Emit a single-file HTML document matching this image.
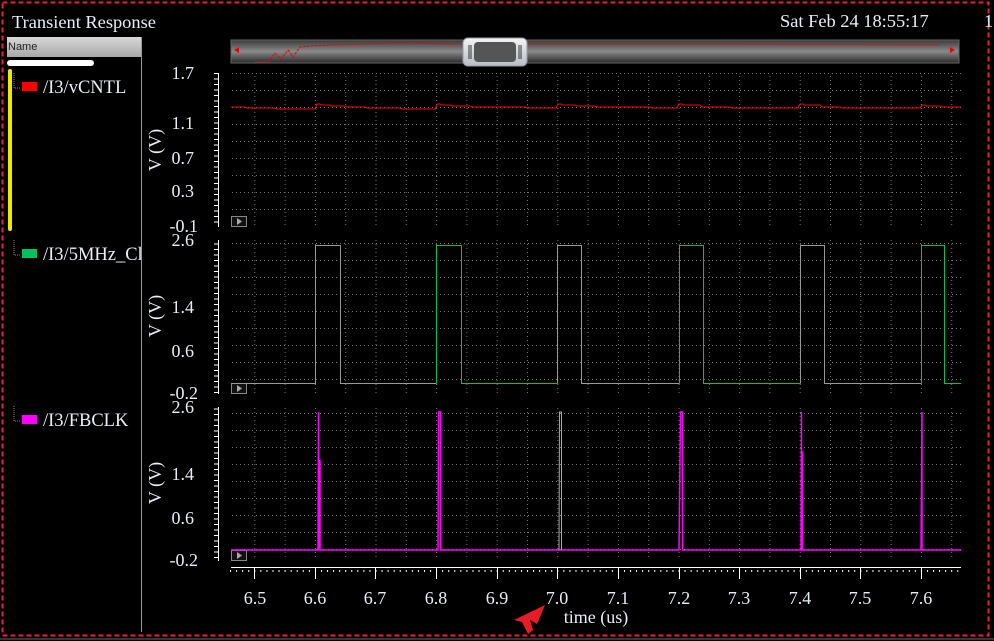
<!DOCTYPE html>
<html><head><meta charset="utf-8"><style>
html,body{margin:0;padding:0;background:#000;width:994px;height:641px;overflow:hidden}
svg{display:block}
text{font-family:"Liberation Serif",serif;fill:#e8eef8}
</style></head><body>
<svg width="994" height="641" viewBox="0 0 994 641" xmlns="http://www.w3.org/2000/svg">
<defs>
<linearGradient id="sl" x1="0" y1="0" x2="0" y2="1">
<stop offset="0" stop-color="#3a3a3a"/><stop offset="0.5" stop-color="#8a8a8a"/><stop offset="1" stop-color="#2a2a2a"/></linearGradient>
<linearGradient id="hd" x1="0" y1="0" x2="0" y2="1">
<stop offset="0" stop-color="#d8d8d8"/><stop offset="1" stop-color="#a8a8a8"/></linearGradient>
<linearGradient id="hn" x1="0" y1="0" x2="0" y2="1">
<stop offset="0" stop-color="#f4f4f4"/><stop offset="1" stop-color="#b8bcc4"/></linearGradient>
<pattern id="gv" x="224" y="0" width="30.3" height="4" patternUnits="userSpaceOnUse"><rect x="0" y="0" width="1" height="1" fill="#777"/></pattern>
<pattern id="gh" x="0" y="73" width="4" height="17" patternUnits="userSpaceOnUse"><rect x="0" y="0" width="1" height="1" fill="#777"/></pattern>
<pattern id="yt" x="0" y="73" width="10" height="5.5" patternUnits="userSpaceOnUse"><rect x="4" y="0" width="4" height="1" fill="#fff"/></pattern>
<pattern id="xt" x="224" y="0" width="6.06" height="10" patternUnits="userSpaceOnUse"><rect x="0" y="0" width="1" height="5" fill="#fff"/></pattern>
<clipPath id="lp"><rect x="0" y="0" width="141" height="641"/></clipPath>
</defs>
<rect x="2.5" y="2.5" width="986" height="633" fill="none" stroke="#e8203a" stroke-width="2" stroke-dasharray="5,3"/>
<line x1="0" y1="639" x2="994" y2="639" stroke="#666" stroke-width="1"/>
<text x="12" y="28" font-size="18.4">Transient Response</text>
<text x="780" y="27" font-size="18.4">Sat Feb 24 18:55:17</text>
<text x="984" y="27" font-size="18.4">1</text>
<rect x="7" y="37" width="134" height="20" fill="url(#hd)"/>
<text x="8" y="50" font-size="11" style="font-family:'Liberation Sans',sans-serif;fill:#222">Name</text>
<line x1="141.5" y1="37" x2="141.5" y2="632" stroke="#999"/>
<rect x="7" y="60" width="87" height="6" rx="3" fill="#fff"/>
<rect x="8" y="69" width="4" height="162" rx="2" fill="#f0e800"/>
<path d="M14 73V88H20M14 240V255H20M14 406V421H20" stroke="#888" fill="none" stroke-dasharray="1,1"/>
<g clip-path="url(#lp)" font-size="18.5">
<rect x="22" y="82" width="15" height="9" fill="#f00"/>
<text x="43" y="93">/I3/vCNTL</text>
<rect x="22" y="249" width="15" height="9" fill="#00c060"/>
<text x="43" y="260">/I3/5MHz_Cl</text>
<rect x="22" y="415" width="15" height="9" fill="#f0f"/>
<text x="43" y="426">/I3/FBCLK</text>
</g>
<rect x="231" y="40" width="728" height="23" fill="url(#sl)" stroke="#666"/>
<path d="M234 50l5 -3v6z M955 50l-5 -3v6z" fill="#e00"/>
<polyline points="255,62 268,62 275,53 281,59 288,50 293,57 300,47 310,46 330,45 400,43 460,44 530,44 700,44 940,45" fill="none" stroke="#e00" stroke-dasharray="3,1"/>
<rect x="463" y="38" width="64" height="28" rx="5" fill="url(#hn)" stroke="#99a"/>
<rect x="474" y="42" width="42" height="20" rx="4" fill="#555"/>
<path d="M469 45v14M471 45v14M519 45v14M521 45v14" stroke="#333"/>
<rect x="231" y="73" width="730" height="153" fill="url(#gv)"/>
<rect x="231" y="73" width="730" height="153" fill="url(#gh)"/>
<rect x="231" y="240" width="730" height="153" fill="url(#gv)"/>
<rect x="231" y="240" width="730" height="153" fill="url(#gh)"/>
<rect x="231" y="407" width="730" height="153" fill="url(#gv)"/>
<rect x="231" y="407" width="730" height="153" fill="url(#gh)"/>
<g>
<rect x="208" y="73" width="10" height="154" fill="url(#yt)"/><line x1="218.5" y1="73" x2="218.5" y2="227" stroke="#fff"/>
<rect x="208" y="240" width="10" height="154" fill="url(#yt)"/><line x1="218.5" y1="240" x2="218.5" y2="394" stroke="#fff"/>
<rect x="208" y="407" width="10" height="154" fill="url(#yt)"/><line x1="218.5" y1="407" x2="218.5" y2="561" stroke="#fff"/>
</g>
<g font-size="18" text-anchor="end">
<text x="194" y="79">1.7</text><text x="194" y="129">1.1</text><text x="194" y="164">0.7</text><text x="194" y="197">0.3</text><text x="198" y="232">-0.1</text>
<text x="194" y="246">2.6</text><text x="194" y="313">1.4</text><text x="194" y="357">0.6</text><text x="198" y="399">-0.2</text>
<text x="194" y="413">2.6</text><text x="194" y="480">1.4</text><text x="194" y="524">0.6</text><text x="198" y="566">-0.2</text>
</g>
<g font-size="18">
<text transform="translate(161,150) rotate(-90)" text-anchor="middle">V (V)</text>
<text transform="translate(161,316) rotate(-90)" text-anchor="middle">V (V)</text>
<text transform="translate(161,483) rotate(-90)" text-anchor="middle">V (V)</text>
</g>
<g fill="#111" stroke="#888"><rect x="231.5" y="216.5" width="15" height="10"/><rect x="231.5" y="383.5" width="15" height="10"/><rect x="231.5" y="550.5" width="15" height="10"/></g>
<g fill="#aaa"><path d="M237 218l5 3.5-5 3.5z M237 385l5 3.5-5 3.5z M237 552l5 3.5-5 3.5z"/></g>
<polyline fill="none" stroke="#f00" stroke-width="1" points="231,107 245,107 247,108 275,108 277,109 315,109 317,104 320,104 321,105 330,105 331,106 345,106 347,107 365,107 367,108 400,108 402,109 435,109 437,104 440,104 441,105 450,105 452,106 470,106 472,107 525,107 527,108 556,108 558,104 561,104 562,105 575,105 577,106 595,106 597,107 650,107 652,108 677,108 679,104 682,104 683,105 700,105 702,107 730,107 732,108 798,108 800,104 803,104 804,105 820,105 822,107 840,107 842,108 920,108 922,105 925,105 926,106 940,106 942,107 961,107"/>
<g fill="none" stroke-width="1">
<polyline stroke="#999" points="231,383.5 315.5,383.5 315.5,245.5 340.5,245.5 340.5,383.5 436.5,383.5"/>
<polyline stroke="#00c060" points="436.5,383.5 436.5,245.5 461.5,245.5 461.5,383.5 557.5,383.5"/>
<polyline stroke="#999" points="557.5,383.5 557.5,245.5 581.5,245.5 581.5,383.5 679.5,383.5"/>
<polyline stroke="#00c060" points="679.5,383.5 679.5,245.5 703.5,245.5 703.5,383.5 800.5,383.5"/>
<polyline stroke="#999" points="800.5,383.5 800.5,245.5 824.5,245.5 824.5,383.5 921.5,383.5"/>
<polyline stroke="#00c060" points="921.5,383.5 921.5,245.5 944.5,245.5 944.5,383.5 961,383.5"/>
</g>
<g fill="none" stroke-width="1.5">
<polyline stroke="#f0f" points="231,550 318,550 318.5,412 318.5,550 320,550 320,460 320,550 438,550 438.5,412 440.5,412 440.5,550 679,550 680.5,412 682.5,412 682.5,550 801,550 801.5,412 801.5,452 802.5,452 802.5,550 921,550 922,412 922,550 961,550"/>
<polyline stroke="#aaa" stroke-width="1" points="559,550 559.5,412 561.5,412 561.5,550"/>
</g>
<line x1="231" y1="567.5" x2="961" y2="567.5" stroke="#fff"/>
<rect x="230" y="567" width="732" height="5" fill="url(#xt)"/>
<g stroke="#fff"><path d="M254.5 567v12M315.5 567v12M375.5 567v12M436.5 567v12M497.5 567v12M557.5 567v12M618.5 567v12M679.5 567v12M739.5 567v12M800.5 567v12M860.5 567v12M921.5 567v12"/></g>
<g font-size="18" text-anchor="middle">
<text x="255" y="604">6.5</text><text x="315" y="604">6.6</text><text x="375" y="604">6.7</text><text x="436" y="604">6.8</text><text x="497" y="604">6.9</text><text x="557" y="604">7.0</text><text x="618" y="604">7.1</text><text x="679" y="604">7.2</text><text x="739" y="604">7.3</text><text x="800" y="604">7.4</text><text x="860" y="604">7.5</text><text x="921" y="604">7.6</text>
</g>
<text x="596" y="623" font-size="18" text-anchor="middle">time (us)</text>
<path d="M545 605 L514 620 L522 622 L528 634 L533 630 L530 620 L537 624 Z" fill="#e81c24"/>
</svg>
</body></html>
